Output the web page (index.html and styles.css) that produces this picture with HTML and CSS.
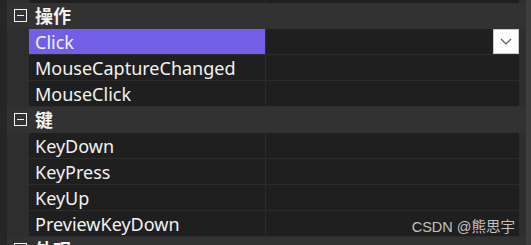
FILE: index.html
```html
<!DOCTYPE html>
<html lang="zh">
<head>
<meta charset="utf-8">
<link rel="stylesheet" href="styles.css">
</head>
<body>
<div class="page">
  <div class="strip"></div>
  <div class="grid">
    <div class="row stub"><div class="gut"></div><div class="name"></div><div class="val"></div><div class="edge"></div></div>
    <div class="row cat"><div class="gut"><span class="tog"></span></div><div class="catname">操作</div><div class="edge"></div></div>
    <div class="row sel"><div class="gut"></div><div class="name">Click</div><div class="val"><span class="drop"><svg width="12" height="7" viewBox="0 0 12 7"><path d="M1 1 L6 6 L11 1" fill="none" stroke="#5a5a5a" stroke-width="1.2"/></svg></span></div><div class="edge"></div></div>
    <div class="row"><div class="gut"></div><div class="name">MouseCaptureChanged</div><div class="val"></div><div class="edge"></div></div>
    <div class="row"><div class="gut"></div><div class="name">MouseClick</div><div class="val"></div><div class="edge"></div></div>
    <div class="row cat"><div class="gut"><span class="tog"></span></div><div class="catname">键</div><div class="edge"></div></div>
    <div class="row"><div class="gut"></div><div class="name">KeyDown</div><div class="val"></div><div class="edge"></div></div>
    <div class="row"><div class="gut"></div><div class="name">KeyPress</div><div class="val"></div><div class="edge"></div></div>
    <div class="row"><div class="gut"></div><div class="name">KeyUp</div><div class="val"></div><div class="edge"></div></div>
    <div class="row"><div class="gut"></div><div class="name">PreviewKeyDown</div><div class="val"></div><div class="edge"></div></div>
    <div class="row cat"><div class="gut"><span class="tog"></span></div><div class="catname">外观</div><div class="edge"></div></div>
  </div>
  <div class="scroll"></div>
  <div class="mark">CSDN @熊思宇</div>
</div>
</body>
</html>
```
FILE: styles.css
```css
html, body {
  margin: 0;
  padding: 0;
  background: #2e2e2e;
}
.page {
  position: relative;
  display: flex;
  width: 531px;
  height: 245px;
  overflow: hidden;
  font-family: "Noto Sans", "Noto Sans CJK SC", sans-serif;
  font-size: 18px;
  color: #f2f2f2;
}
.strip {
  width: 7px;
  background: #262626;
  flex: none;
}
.grid {
  width: 519px;
  flex: none;
  background: #2e2e2e;
  display: flex;
  flex-direction: column;
}
.scroll {
  width: 5px;
  flex: none;
  background: #3e3e3e;
}
.row {
  display: grid;
  grid-template-columns: 22px 236px 1px 253px 7px;
  height: 26px;
  flex: none;
}
.row .gut { grid-column: 1; }
.row .name {
  grid-column: 2;
  background: #1f1f1f;
  border-bottom: 1px solid #2c2c2c;
  padding-left: 6px;
  line-height: 26px;
  white-space: nowrap;
  overflow: hidden;
}
.row .val {
  grid-column: 4;
  background: #1f1f1f;
  border-bottom: 1px solid #2c2c2c;
  display: flex;
  justify-content: flex-end;
}
.row::before {
  content: "";
  grid-column: 3;
  grid-row: 1;
  background: #2c2c2c;
}
.row .edge { grid-column: 5; }
.stub { height: 3px; }
.stub .name, .stub .val { border-bottom: 0; }
.sel .name { background: #725fe6; }
.cat {
  background: #323232;
}
.cat::before { display: none; }
.catname {
  grid-column: 2 / 5;
  padding-left: 6px;
  font-weight: bold;
  font-size: 18px;
  line-height: 27px;
}
.gut {
  display: flex;
  align-items: flex-start;
}
.tog {
  margin: 6px 0 0 7px;
  width: 11px;
  height: 11px;
  border: 1px solid #f2f2f2;
  position: relative;
  box-sizing: content-box;
}
.tog::after {
  content: "";
  position: absolute;
  left: 2px;
  right: 2px;
  top: 5px;
  height: 1px;
  background: #f2f2f2;
}
.drop {
  width: 24px;
  height: 23px;
  background: #fdfdfd;
  border: 1px solid #c9c9c9;
  display: flex;
  align-items: center;
  justify-content: center;
}
.mark {
  position: absolute;
  right: 16px;
  top: 215px;
  font-family: "Liberation Sans", "Noto Sans CJK SC", sans-serif;
  font-size: 14.5px;
  color: #c2c2c2;
}
```
